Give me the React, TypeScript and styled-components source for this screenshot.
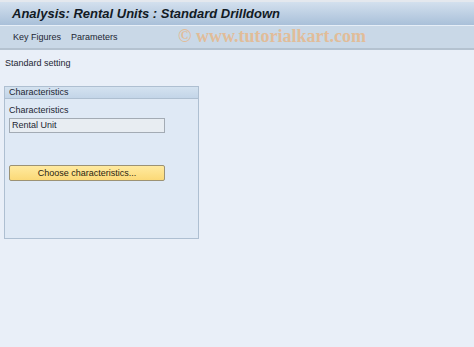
import styled, { createGlobalStyle } from 'styled-components';

const GlobalStyle = createGlobalStyle`
    html, body {
        margin: 0;
        padding: 0;
        background: #e9eff8;
    }
    body {
        font-family: 'Liberation Sans', Arial, sans-serif;
        font-size: 9px;
        color: #1d2633;
    }
`;

const StyledWindow = styled.div`
    width: 474px;
    height: 347px;
    display: flex;
    flex-direction: column;
    background: #e9eff8;
    overflow: hidden;
`;

const StyledTitleBar = styled.div`
    height: 23px;
    display: flex;
    align-items: center;
    padding-left: 12px;
    border-top: 2px solid #e4e8ee;
    background: linear-gradient(#d3e0ee, #a9c0d9);
`;

const StyledTitle = styled.h1`
    margin: 0;
    font-size: 13px;
    font-weight: bold;
    font-style: italic;
    color: #121a24;
`;

const StyledToolbar = styled.div`
    height: 22px;
    display: flex;
    align-items: center;
    gap: 10px;
    padding-left: 13px;
    background: #c9d8e7;
    border-top: 1px solid #e6eef7;
    border-bottom: 2px solid #b4c2d0;
    position: relative;
`;

const StyledMenuItem = styled.span`
    font-size: 9px;
    color: #1d2633;
`;

const StyledWatermark = styled.span`
    position: absolute;
    left: 178px;
    top: 0;
    font-family: 'Liberation Serif', 'Times New Roman', serif;
    font-weight: bold;
    font-size: 18px;
    color: #e6b88c;
    opacity: 0.85;
`;

const StyledContent = styled.div`
    flex: 1;
    padding: 8px 0 0 4px;
    display: flex;
    flex-direction: column;
    align-items: flex-start;
`;

const StyledSetting = styled.div`
    padding-left: 1px;
    margin-bottom: 18px;
`;

const StyledGroup = styled.div`
    width: 193px;
    height: 151px;
    border: 1px solid #aebfd1;
    background: #dfe9f5;
    display: flex;
    flex-direction: column;
`;

const StyledGroupHeader = styled.div`
    height: 11px;
    line-height: 11px;
    padding-left: 4px;
    background: linear-gradient(#d4e2f0, #c3d5e8);
    border-bottom: 1px solid #aebfd1;
`;

const StyledGroupBody = styled.div`
    padding: 6px 0 0 4px;
    display: flex;
    flex-direction: column;
`;

const StyledLabel = styled.div`
    margin-bottom: 3px;
`;

const StyledField = styled.div`
    width: 152px;
    height: 13px;
    line-height: 13px;
    padding-left: 2px;
    border: 1px solid #a3abb4;
    background: #e8edf2;
`;

const StyledButton = styled.button`
    margin-top: 32px;
    width: 156px;
    height: 16px;
    padding: 0;
    font-family: inherit;
    font-size: 9px;
    color: #2a2410;
    border: 1px solid #9c9274;
    border-radius: 2px;
    background: linear-gradient(#ffeaa0, #fbd977);
`;

const App = () => {
    return (
        <>
            <GlobalStyle />
            <StyledWindow>
                <StyledTitleBar>
                    <StyledTitle>Analysis: Rental Units : Standard Drilldown</StyledTitle>
                </StyledTitleBar>
                <StyledToolbar>
                    <StyledMenuItem>Key Figures</StyledMenuItem>
                    <StyledMenuItem>Parameters</StyledMenuItem>
                    <StyledWatermark>© www.tutorialkart.com</StyledWatermark>
                </StyledToolbar>
                <StyledContent>
                    <StyledSetting>Standard setting</StyledSetting>
                    <StyledGroup>
                        <StyledGroupHeader>Characteristics</StyledGroupHeader>
                        <StyledGroupBody>
                            <StyledLabel>Characteristics</StyledLabel>
                            <StyledField>Rental Unit</StyledField>
                            <StyledButton>Choose characteristics...</StyledButton>
                        </StyledGroupBody>
                    </StyledGroup>
                </StyledContent>
            </StyledWindow>
        </>
    );
};

export default App;
